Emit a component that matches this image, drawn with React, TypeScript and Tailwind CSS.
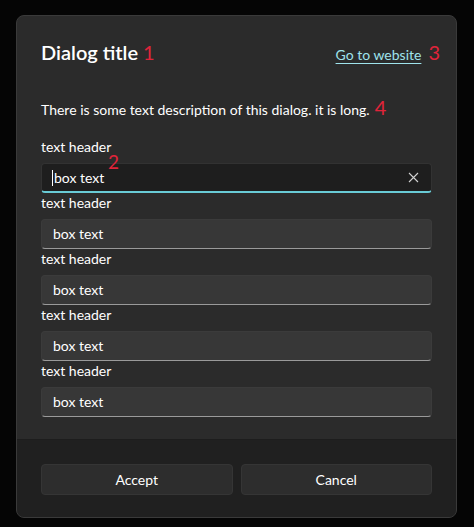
const font = { fontFamily: 'Lato, "Noto Sans", sans-serif' };

const Field = ({ focused = false }: { focused?: boolean }) => (
  <div>
    <div className="h-5 leading-5 text-sm text-white mb-[6px]">text header</div>
    {focused ? (
      <div className="relative h-[30px] rounded-[4px] bg-[#1e1e1e] border border-[#323232] border-b-2 border-b-[#69cbd6] flex items-center pl-[10px] pr-[12px]">
        <span className="w-px h-[16px] bg-white mr-[1px]" />
        <span className="text-sm text-white flex-1">box text</span>
        <svg width="11" height="11" viewBox="0 0 11 11" className="text-[#d0d0d0]">
          <path d="M1 1 L10 10 M10 1 L1 10" stroke="currentColor" strokeWidth="1.1" />
        </svg>
        <span className="absolute left-[66px] -top-[12px] text-[19px] leading-none text-[#e0243a]">2</span>
      </div>
    ) : (
      <div className="h-[30px] rounded-[4px] bg-[#373737] border border-[#3b3b3b] border-b-[#9a9a9a] flex items-center px-[11px]">
        <span className="text-sm text-white">box text</span>
      </div>
    )}
  </div>
);

export default function App() {
  return (
    <div className="w-[474px] h-[527px] bg-[#050505] pt-[15px] pl-[16px]" style={font}>
      <div className="w-[441px] h-[503px] rounded-[8px] border border-[#3a3a3a] bg-[#2b2b2b] overflow-hidden flex flex-col">
        <div className="flex-1 px-6 pt-[22px]">
          <div className="flex items-center justify-between h-[28px]">
            <div className="flex items-baseline text-white text-[20px] font-semibold">
              Dialog title
              <span className="ml-[5px] font-normal text-[#e0243a]">1</span>
            </div>
            <div className="flex items-baseline">
              <a className="text-sm text-[#9fe3ec] underline underline-offset-[3px]">Go to website</a>
              <span className="ml-[7px] text-[20px] text-[#e0243a] -mr-[8px]">3</span>
            </div>
          </div>
          <div className="mt-[31px] flex items-baseline text-sm text-white">
            There is some text description of this dialog. it is long.
            <span className="ml-[5px] text-[20px] leading-none text-[#e0243a]">4</span>
          </div>
          <div className="mt-[17px] flex flex-col">
            <Field focused />
            <Field />
            <Field />
            <Field />
            <Field />
          </div>
        </div>
        <div className="h-[78px] bg-[#202020] border-t border-[#1d1d1d] px-6 pt-[24px] flex gap-2">
          <button className="flex-1 h-[31px] rounded-[4px] bg-[#2d2d2d] border border-[#353535] text-sm text-white">Accept</button>
          <button className="flex-1 h-[31px] rounded-[4px] bg-[#2d2d2d] border border-[#353535] text-sm text-white">Cancel</button>
        </div>
      </div>
    </div>
  );
}
